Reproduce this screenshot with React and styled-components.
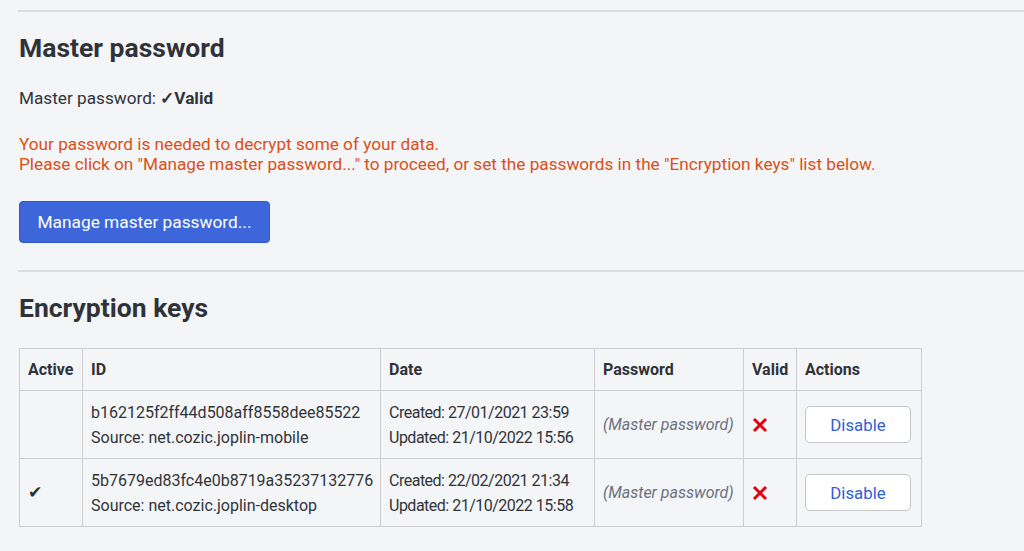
import styled, { createGlobalStyle } from "styled-components";

const GlobalStyle = createGlobalStyle`
  html, body {
    margin: 0;
    padding: 0;
    background: #f4f5f7;
  }
  body {
    font-family: Roboto, "Liberation Sans", sans-serif;
    color: #30343a;
    font-size: 16px;
  }
`;

const Page = styled.div`
  padding: 10px 0 0 18px;
  width: 1024px;
  height: 551px;
  box-sizing: border-box;
  overflow: hidden;
`;

const Rule = styled.div`
  border-top: 2px solid #dcdde1;
`;

const Heading = styled.h2`
  margin: ${(p) => p.$top}px 0 0 1px;
  font-size: 26.5px;
  line-height: 32px;
  font-weight: 700;
  color: #2f3238;
`;

const Line = styled.div`
  margin: ${(p) => p.$top || 0}px 0 0 1px;
  font-size: 17.2px;
  line-height: 20px;
  color: ${(p) => (p.$warn ? "#d9501a" : "#30343a")};
`;

const Valid = styled.b`
  font-weight: 700;
`;

const PrimaryButton = styled.button`
  margin: 27px 0 27px 1px;
  width: 251px;
  height: 42px;
  border: 1px solid #2f59cc;
  border-radius: 4px;
  background: #3c66d9;
  color: #fff;
  font-family: inherit;
  font-size: 17.3px;
  padding: 0;
  cursor: pointer;
`;

const Table = styled.table`
  margin: 24px 0 0 1px;
  border-collapse: collapse;
  table-layout: fixed;
  width: 902px;
`;

const Th = styled.th`
  box-sizing: border-box;
  width: ${(p) => p.$w}px;
  height: 42px;
  border: 1px solid #cdcecf;
  padding: 0 8px;
  text-align: left;
  font-weight: 700;
  font-size: 16px;
  color: #2f3238;
`;

const Td = styled.td`
  box-sizing: border-box;
  height: 68px;
  border: 1px solid #cdcecf;
  padding: 0 8px;
  vertical-align: middle;
  line-height: 25px;
  white-space: nowrap;
  letter-spacing: ${(p) => (p.$tight ? "-0.5px" : "normal")};
`;

const Muted = styled.span`
  font-style: italic;
  color: #6a7180;
`;

const Check = styled.span`
  font-size: 17px;
  color: #2a2d31;
`;

const DisableButton = styled.button`
  width: 106px;
  height: 37px;
  border: 1px solid #c4c6c9;
  border-radius: 5px;
  background: #fff;
  color: #2e5fd6;
  font-family: inherit;
  font-size: 16.8px;
  padding: 0;
  display: block;
  cursor: pointer;
`;

const Cross = () => (
  <svg width="16" height="16" viewBox="0 0 16 16" style={{ display: "block" }}>
    <path d="M2 2 L14 14 M14 2 L2 14" stroke="#e3000f" strokeWidth="3" strokeLinecap="butt" />
  </svg>
);

const keys = [
  {
    active: false,
    id: "b162125f2ff44d508aff8558dee85522",
    source: "net.cozic.joplin-mobile",
    created: "27/01/2021 23:59",
    updated: "21/10/2022 15:56",
  },
  {
    active: true,
    id: "5b7679ed83fc4e0b8719a35237132776",
    source: "net.cozic.joplin-desktop",
    created: "22/02/2021 21:34",
    updated: "21/10/2022 15:58",
  },
];

export default function App() {
  return (
    <Page>
      <GlobalStyle />
      <Rule />
      <Heading $top={20}>Master password</Heading>
      <Line $top={24}>
        Master password: <Valid>✓Valid</Valid>
      </Line>
      <Line $top={26} $warn>
        Your password is needed to decrypt some of your data.
        <br />
        Please click on "Manage master password..." to proceed, or set the passwords in the "Encryption keys" list below.
      </Line>
      <PrimaryButton>Manage master password...</PrimaryButton>
      <Rule />
      <Heading $top={20}>Encryption keys</Heading>
      <Table>
        <thead>
          <tr>
            <Th $w={63}>Active</Th>
            <Th $w={298}>ID</Th>
            <Th $w={214}>Date</Th>
            <Th $w={149}>Password</Th>
            <Th $w={53}>Valid</Th>
            <Th $w={125}>Actions</Th>
          </tr>
        </thead>
        <tbody>
          {keys.map((k) => (
            <tr key={k.id}>
              <Td>{k.active && <Check>✔</Check>}</Td>
              <Td>
                {k.id}
                <br />
                Source: {k.source}
              </Td>
              <Td $tight>
                Created: {k.created}
                <br />
                Updated: {k.updated}
              </Td>
              <Td>
                <Muted>(Master password)</Muted>
              </Td>
              <Td>
                <Cross />
              </Td>
              <Td>
                <DisableButton>Disable</DisableButton>
              </Td>
            </tr>
          ))}
        </tbody>
      </Table>
    </Page>
  );
}
